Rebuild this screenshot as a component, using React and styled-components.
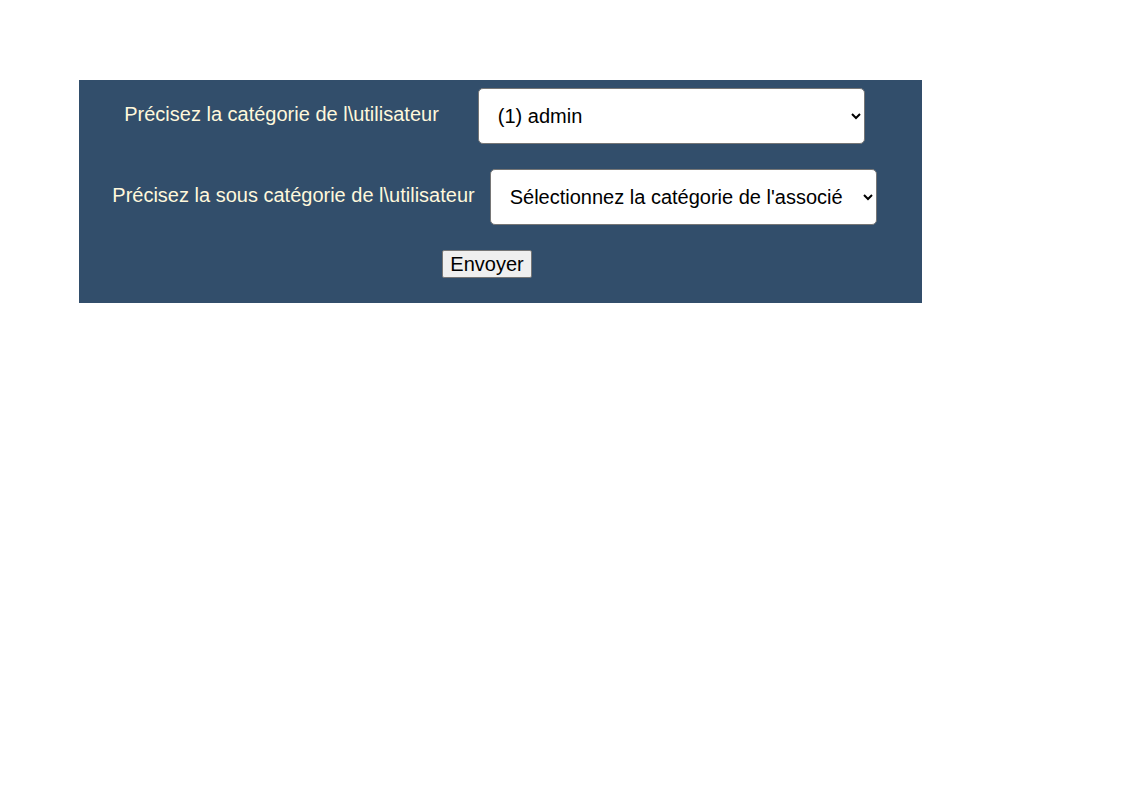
import styled, { createGlobalStyle } from "styled-components";

const GlobalStyle = createGlobalStyle`
  html, body {
    margin: 0;
    background: #fff;
    font-family: "Liberation Sans", Arial, sans-serif;
  }
`;

const Page = styled.div`
  padding: 80px 0 0 79px;
`;

const Panel = styled.form`
  width: 843px;
  box-sizing: border-box;
  background-color: #324e6b;
  padding: 8px 12px 25px 0;
  display: flex;
  flex-direction: column;
  gap: 25px;
`;

const Row = styled.div`
  display: flex;
  justify-content: center;
  align-items: center;
  gap: ${(p) => p.$gap}px;
`;

const Label = styled.label`
  color: #fff8dc;
  font-size: 20px;
  line-height: 23px;
  margin-bottom: 3px;
`;

const Select = styled.select`
  width: 387px;
  height: 56px;
  box-sizing: border-box;
  padding: 0 8px 0 15px;
  font-family: "Liberation Sans", Arial, sans-serif;
  font-size: 20px;
  color: #000;
  background-color: #fff;
  border: 1px solid #767676;
  border-radius: 5px;
`;

const Actions = styled.div`
  display: flex;
  justify-content: center;
  padding-right: 15px;
`;

const Button = styled.button`
  font-family: "Liberation Sans", Arial, sans-serif;
  font-size: 20px;
  line-height: 24px;
  padding: 1px 7px;
  color: #000;
  background-color: #efefef;
  border: 1px solid #767676;
  border-radius: 2px;
`;

export default function App() {
  return (
    <>
      <GlobalStyle />
      <Page>
        <Panel onSubmit={(e) => e.preventDefault()}>
          <Row $gap={39}>
            <Label htmlFor="categorie">Précisez la catégorie de l\utilisateur</Label>
            <Select id="categorie" defaultValue="1">
              <option value="1">(1) admin</option>
            </Select>
          </Row>
          <Row $gap={15}>
            <Label htmlFor="souscategorie">Précisez la sous catégorie de l\utilisateur</Label>
            <Select id="souscategorie" defaultValue="">
              <option value="">Sélectionnez la catégorie de l'associé</option>
            </Select>
          </Row>
          <Actions>
            <Button type="submit">Envoyer</Button>
          </Actions>
        </Panel>
      </Page>
    </>
  );
}
